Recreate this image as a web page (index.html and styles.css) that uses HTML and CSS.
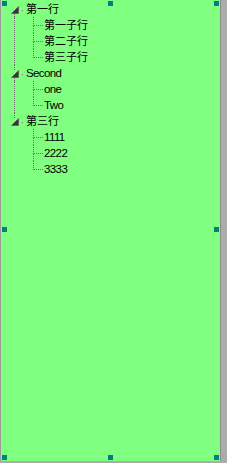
FILE: index.html
```html
<!DOCTYPE html>
<html lang="zh">
<head>
    <meta charset="UTF-8">
    <title>Tree</title>
    <link rel="stylesheet" href="styles.css">
</head>
<body>
    <div class="panel">
        <ul class="tree">
            <li class="node first">
                <div class="root-row">
                    <svg width="25" height="16" viewBox="0 0 25 16">
                        <line class="below" x1="13.5" y1="13" x2="13.5" y2="16"/>
                        <polygon class="arrow" points="10.5,12.5 17.5,5.5 17.5,12.5"/>
                        <rect x="21" y="9" width="1" height="1" fill="#707070"/>
                    </svg>
                    <span class="label">第一行</span>
                </div>
                <ul class="children">
                    <li class="leaf"><span class="elbow"></span><span class="label">第一子行</span></li>
                    <li class="leaf"><span class="elbow"></span><span class="label">第二子行</span></li>
                    <li class="leaf last"><span class="elbow"></span><span class="label">第三子行</span></li>
                </ul>
            </li>
            <li class="node">
                <div class="root-row">
                    <svg width="25" height="16" viewBox="0 0 25 16">
                        <line class="above" x1="13.5" y1="0" x2="13.5" y2="6"/>
                        <line class="below" x1="13.5" y1="13" x2="13.5" y2="16"/>
                        <polygon class="arrow" points="10.5,12.5 17.5,5.5 17.5,12.5"/>
                        <rect x="21" y="9" width="1" height="1" fill="#707070"/>
                    </svg>
                    <span class="label latin">Second</span>
                </div>
                <ul class="children">
                    <li class="leaf"><span class="elbow"></span><span class="label latin">one</span></li>
                    <li class="leaf last"><span class="elbow"></span><span class="label latin">Two</span></li>
                </ul>
            </li>
            <li class="node last">
                <div class="root-row">
                    <svg width="25" height="16" viewBox="0 0 25 16">
                        <line class="above" x1="13.5" y1="0" x2="13.5" y2="6"/>
                        <polygon class="arrow" points="10.5,12.5 17.5,5.5 17.5,12.5"/>
                        <rect x="21" y="9" width="1" height="1" fill="#707070"/>
                    </svg>
                    <span class="label">第三行</span>
                </div>
                <ul class="children">
                    <li class="leaf"><span class="elbow"></span><span class="label latin">1111</span></li>
                    <li class="leaf"><span class="elbow"></span><span class="label latin">2222</span></li>
                    <li class="leaf last"><span class="elbow"></span><span class="label latin">3333</span></li>
                </ul>
            </li>
        </ul>

        <!-- selection handles -->
        <span class="handle h-tl"></span>
        <span class="handle h-tm"></span>
        <span class="handle h-tr"></span>
        <span class="handle h-ml"></span>
        <span class="handle h-mr"></span>
        <span class="handle h-bl"></span>
        <span class="handle h-bm"></span>
        <span class="handle h-br"></span>
    </div>
</body>
</html>
```

FILE: styles.css
```css
/* Page */
body {
    margin: 0;
    background: #acacac;
}

/* Green tree panel */
.panel {
    position: relative;
    box-sizing: border-box;
    width: 221px;
    height: 461px;
    background: #80ff80;
    border-left: 1px solid #9c9c9c;
    border-right: 1px solid #8c8c8c;
    font-family: "Liberation Sans", "Noto Sans CJK SC", sans-serif;
    font-size: 11px;
    color: #000;
}

.tree, .children {
    list-style: none;
    margin: 0;
    padding: 0;
}

.tree {
    padding-top: 1px;
}

/* Root rows */
.root-row {
    display: flex;
    align-items: center;
    height: 16px;
}

.root-row svg {
    flex: none;
    display: block;
}

.root-row line {
    stroke: #707070;
    stroke-width: 1;
    stroke-dasharray: 1 1;
}

.arrow {
    fill: #333333;
    stroke: #555555;
    stroke-width: 0.6;
}

.label {
    line-height: 16px;
    white-space: nowrap;
}

.latin {
    font-size: 11.5px;
    letter-spacing: -0.6px;
}

/* Children with the root line running past them */
.children {
    margin-left: 13px;
    border-left: 1px dotted #707070;
}

.node.last .children {
    border-left-color: transparent;
}

.leaf {
    display: flex;
    height: 16px;
    padding-left: 18px;
}

.elbow {
    flex: none;
    width: 10px;
    margin-right: 1px;
    display: flex;
    flex-direction: column;
}

.elbow::before {
    content: "";
    height: 8px;
    border-left: 1px dotted #707070;
    border-bottom: 1px dotted #707070;
}

.elbow::after {
    content: "";
    height: 7px;
    border-left: 1px dotted #707070;
}

.leaf.last .elbow::after {
    border-left-color: transparent;
}

/* Selection handles */
.handle {
    position: absolute;
    width: 5px;
    height: 5px;
    background: #008080;
}

.h-tl { left: 1px; top: 1px; }
.h-tm { left: 107px; top: 1px; }
.h-tr { left: 213px; top: 1px; }
.h-ml { left: 1px; top: 227px; }
.h-mr { left: 213px; top: 227px; }
.h-bl { left: 1px; top: 455px; }
.h-bm { left: 107px; top: 455px; }
.h-br { left: 213px; top: 455px; }
```
